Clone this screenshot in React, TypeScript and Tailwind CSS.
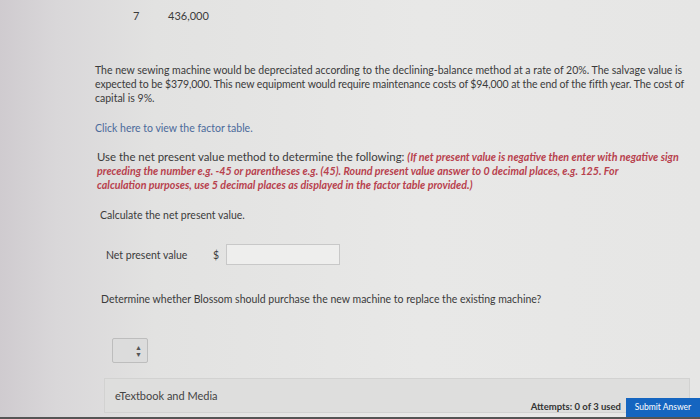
export default function App() {
  return (
    <div
      className="w-[700px] h-[419px] overflow-hidden relative bg-[linear-gradient(90deg,#cfcbcf_0%,#d9d7d9_8%,#e2e2e1_22%,#e8e8e7_60%,#e6e6e5_100%)] text-[#3b3b3b]"
      style={{ fontFamily: "Lato, 'Open Sans', sans-serif" }}
    >
      <div className="flex flex-col pl-[95px] pt-[9px] text-[10.5px] leading-[14px]">
        <div className="flex text-[11px] pl-[38px]">
          <span className="w-[35px]">7</span>
          <span>436,000</span>
        </div>

        <p className="mt-[40px] whitespace-nowrap">
          The new sewing machine would be depreciated according to the declining-balance method at a rate of 20%. The salvage value is
          <br />
          <span className="tracking-[-0.1px]">
            expected to be $379,000. This new equipment would require maintenance costs of $94,000 at the end of the fifth year. The cost of
          </span>
          <br />
          capital is 9%.
        </p>

        <p className="mt-[16px] text-[#4b6a9b]">Click here to view the factor table.</p>

        <p className="mt-[15px] pl-[2px] whitespace-nowrap text-[11.4px]">
          Use the net present value method to determine the following:{" "}
          <span className="text-[#b8414d] font-bold italic text-[10.7px]">
            (If net present value is negative then enter with negative sign
            <br />
            preceding the number e.g. -45 or parentheses e.g. (45). Round present value answer to 0 decimal places, e.g. 125. For
            <br />
            calculation purposes, use 5 decimal places as displayed in the factor table provided.)
          </span>
        </p>

        <p className="mt-[16px] pl-[5px]">Calculate the net present value.</p>

        <div className="mt-[22px] pl-[11px] flex items-center">
          <span className="w-[107px]">Net present value</span>
          <span className="w-[13px]">$</span>
          <div className="w-[114px] h-[21px] border border-[#c8c8c8] bg-[#eeeeed]" />
        </div>

        <p className="mt-[27px] pl-[6px]">Determine whether Blossom should purchase the new machine to replace the existing machine?</p>

        <div className="mt-[32px] ml-[17px] w-[36px] h-[25px] border border-[#bdbdbd] rounded-[2px] bg-[#dcdcdc] flex items-center justify-end pr-[5px]">
          <span className="text-[7px] leading-[7px] text-[#555] flex flex-col items-center">
            <span>▲</span>
            <span>▼</span>
          </span>
        </div>

        <div className="mt-[15px] ml-[9px] w-[586px] h-[35px] bg-[#dededd] border border-[#d2d2d1] flex items-center pl-[10px] text-[11px] text-[#444]">
          eTextbook and Media
        </div>
      </div>

      <div className="absolute right-0 bottom-[2px] flex items-center gap-[5px]">
        <span className="text-[9.5px] font-bold text-[#333]">Attempts: 0 of 3 used</span>
        <span className="bg-[#1565c0] text-white text-[8.5px] h-[19px] w-[74px] flex items-center justify-center">Submit Answer</span>
      </div>
      <div className="absolute left-0 right-0 bottom-0 h-[2px] bg-[#555]" />
    </div>
  );
}
